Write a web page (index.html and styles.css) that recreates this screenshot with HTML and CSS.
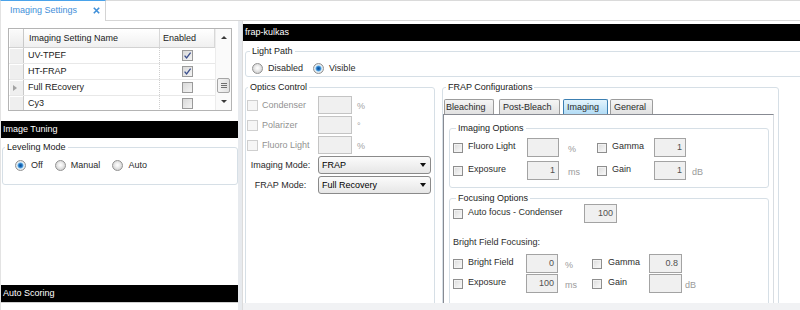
FILE: index.html
```html
<!DOCTYPE html>
<html>
<head>
<meta charset="utf-8">
<title>Imaging Settings</title>
<link rel="stylesheet" href="styles.css">
</head>
<body>
<div class="app">
  <div class="tabstrip">
    <div class="doctab">
      <span class="doctab-title">Imaging Settings</span>
      <svg class="close" width="7" height="7" viewBox="0 0 7 7"><path d="M0.8 0.8 L6.2 6.2 M6.2 0.8 L0.8 6.2" stroke="#3f8fd9" stroke-width="1.6" fill="none"/></svg>
    </div>
    <div class="stripfill"></div>
  </div>

  <div class="main">
    <div class="left">
      <div class="gridwrap">
        <div class="grid">
          <div class="gbody">
            <div class="grow ghead">
              <div class="rh"></div>
              <div class="cname">Imaging Setting Name</div>
              <div class="cen hd">Enabled</div>
            </div>
            <div class="grow">
              <div class="rh"></div>
              <div class="cname">UV-TPEF</div>
              <div class="cen"><span class="gcb"><svg width="9" height="9" viewBox="0 0 9 9"><path d="M1.6 4.6 L3.6 7 L7.6 1.6" stroke="#3b4f8e" stroke-width="1.3" fill="none"/></svg></span></div>
            </div>
            <div class="grow">
              <div class="rh"></div>
              <div class="cname">HT-FRAP</div>
              <div class="cen"><span class="gcb"><svg width="9" height="9" viewBox="0 0 9 9"><path d="M1.6 4.6 L3.6 7 L7.6 1.6" stroke="#3b4f8e" stroke-width="1.3" fill="none"/></svg></span></div>
            </div>
            <div class="grow">
              <div class="rh"><span class="cur"></span></div>
              <div class="cname">Full REcovery</div>
              <div class="cen"><span class="gcb"></span></div>
            </div>
            <div class="grow">
              <div class="rh"></div>
              <div class="cname">Cy3</div>
              <div class="cen"><span class="gcb"></span></div>
            </div>
          </div>
          <div class="vscroll">
            <div class="sarrow"><span class="tri-up"></span></div>
            <div class="strack"><div class="thumb"><i></i><i></i><i></i></div></div>
            <div class="sarrow"><span class="tri-down"></span></div>
          </div>
        </div>
      </div>

      <div class="bar tuning">Image Tuning</div>

      <fieldset class="gb leveling">
        <legend>Leveling Mode</legend>
        <div class="radios">
          <label class="rb"><span class="radio on"></span>Off</label>
          <label class="rb"><span class="radio"></span>Manual</label>
          <label class="rb"><span class="radio"></span>Auto</label>
        </div>
      </fieldset>

      <div class="bar scoring">Auto Scoring</div>
    </div>

    <div class="splitter"></div>

    <div class="right">
      <div class="rcontent">
        <div class="bar title">frap-kulkas</div>

        <fieldset class="gb lightpath">
          <legend>Light Path</legend>
          <div class="radios lp">
            <label class="rb"><span class="radio"></span>Disabled</label>
            <label class="rb"><span class="radio on"></span>Visible</label>
          </div>
        </fieldset>

        <div class="lower">
          <fieldset class="gb optics">
            <legend>Optics Control</legend>
            <div class="opt-rows">
              <div class="opt-row"><span class="cb dis"></span><span class="lbl dis">Condenser</span><span class="inp dis"></span><span class="unit dis">%</span></div>
              <div class="opt-row"><span class="cb dis"></span><span class="lbl dis">Polarizer</span><span class="inp dis"></span><span class="unit dis">°</span></div>
              <div class="opt-row"><span class="cb dis"></span><span class="lbl dis">Fluoro Light</span><span class="inp dis"></span><span class="unit dis">%</span></div>
              <div class="sel-row"><span class="sel-lbl">Imaging Mode:</span><span class="select">FRAP<span class="tri-down big"></span></span></div>
              <div class="sel-row"><span class="sel-lbl">FRAP Mode:</span><span class="select">Full Recovery<span class="tri-down big"></span></span></div>
            </div>
          </fieldset>

          <fieldset class="gb frapcfg">
            <legend>FRAP Configurations</legend>
            <div class="tabs">
              <span class="tab t-bleach">Bleaching</span>
              <span class="tab t-post">Post-Bleach</span>
              <span class="tab t-img active">Imaging</span>
              <span class="tab t-gen">General</span>
            </div>
            <div class="tabpanel">
              <fieldset class="gb imgopts">
                <legend>Imaging Options</legend>
                <div class="io-rows">
                  <div class="io-row"><span class="cb"></span><span class="lbl">Fluoro Light</span><span class="inp"></span><span class="unit">%</span><span class="cb"></span><span class="lbl">Gamma</span><span class="inp">1</span><span class="unit"></span></div>
                  <div class="io-row"><span class="cb"></span><span class="lbl">Exposure</span><span class="inp">1</span><span class="unit">ms</span><span class="cb"></span><span class="lbl">Gain</span><span class="inp">1</span><span class="unit">dB</span></div>
                </div>
              </fieldset>
              <fieldset class="gb focopts">
                <legend>Focusing Options</legend>
                <div class="af-row"><span class="cb"></span><span class="lbl">Auto focus - Condenser</span><span class="inp">100</span></div>
                <div class="bff">Bright Field Focusing:</div>
                <div class="fo-rows">
                  <div class="fo-row"><span class="cb"></span><span class="lbl">Bright Field</span><span class="inp">0</span><span class="unit">%</span><span class="cb"></span><span class="lbl">Gamma</span><span class="inp">0.8</span><span class="unit"></span></div>
                  <div class="fo-row"><span class="cb"></span><span class="lbl">Exposure</span><span class="inp">100</span><span class="unit">ms</span><span class="cb"></span><span class="lbl">Gain</span><span class="inp"></span><span class="unit">dB</span></div>
                </div>
              </fieldset>
            </div>
          </fieldset>
        </div>
      </div>
      <div class="rfoot"></div>
    </div>
  </div>
</div>
</body>
</html>
```

FILE: styles.css
```css
* { box-sizing: border-box; }
html, body { margin: 0; padding: 0; }
body {
  width: 800px;
  height: 310px;
  overflow: hidden;
  background: #fff;
  font-family: "Liberation Sans", Arial, sans-serif;
  font-size: 9px;
  line-height: 11px;
  color: #1a1a1a;
}
.app { display: flex; flex-direction: column; height: 310px; }

/* document tab strip */
.tabstrip { display: flex; height: 21px; flex: none; }
.doctab {
  width: 106px;
  border-top: 1px solid #4aa3ea;
  border-left: 1px solid #e2e2e2;
  border-right: 1px solid #d4d4d4;
  display: flex;
  align-items: center;
  padding: 0 0 1px 9px;
  color: #3f8fd9;
}
.doctab-title { width: 83px; }
.close { flex: none; }
.stripfill { flex: 1; border-top: 1px solid #dadada; border-bottom: 1px solid #d6d6d6; }

.main { display: flex; flex: 1; min-height: 0; }

/* left column */
.left {
  width: 238px;
  flex: none;
  display: flex;
  flex-direction: column;
  border-left: 1px solid #e3e3e3;
}
.gridwrap { padding: 7px 6px 0 7px; flex: none; }
.grid {
  display: flex;
  height: 83px;
  border: 1px solid #b4b4b4;
  overflow: hidden;
}
.gbody { width: 206px; flex: none; }
.grow { display: flex; height: 16px; border-bottom: 1px solid #e8e8e8; }
.grow.ghead {
  height: 19px;
  background: linear-gradient(#ffffff, #f0f0f0);
  border-bottom: 1px solid #d2d2d2;
}
.rh {
  width: 15px;
  flex: none;
  background: #efefef;
  border-right: 1px solid #c9c9c9;
  box-shadow: inset 1px 1px #ffffff;
  display: flex;
  align-items: center;
  padding-left: 4px;
}
.ghead .rh { background: linear-gradient(#fbfbfb, #ececec); }
.cname {
  width: 136px;
  flex: none;
  display: flex;
  align-items: center;
  padding: 0 0 1px 4px;
  border-right: 1px dotted #cfcfcf;
}
.ghead .cname { padding: 1px 0 0 5px; border-right: 1px solid #d8d8d8; }
.cen { flex: 1; display: flex; align-items: center; justify-content: center; padding-right: 1px; }
.cen.hd { justify-content: flex-start; padding: 1px 0 0 3px; border-right: 1px solid #d8d8d8; }
.cur {
  width: 0; height: 0;
  border-left: 4px solid #a3a3a3;
  border-top: 3.5px solid transparent;
  border-bottom: 3.5px solid transparent;
}
.gcb {
  width: 11px; height: 11px;
  border: 1px solid #9a9a9a;
  background: linear-gradient(135deg, #d9d9d9, #f4f4f4);
  display: flex; align-items: center; justify-content: center;
}
.vscroll {
  flex: 1;
  display: flex;
  flex-direction: column;
  background: #fafafa;
  border-left: 1px solid #ececec;
}
.sarrow { height: 17px; flex: none; display: flex; align-items: center; justify-content: center; }
.strack { flex: 1; }
.thumb {
  margin: 32px 1px 0 1px;
  height: 15px;
  border: 1px solid #a6a6a6;
  border-radius: 2px;
  background: linear-gradient(90deg, #f4f4f4, #e2e2e2);
  display: flex;
  flex-direction: column;
  align-items: center;
  justify-content: center;
  gap: 1px;
}
.thumb i { display: block; width: 6px; height: 1px; background: #707070; }
.tri-up {
  width: 0; height: 0;
  border-bottom: 3px solid #3a3a3a;
  border-left: 3px solid transparent;
  border-right: 3px solid transparent;
}
.tri-down {
  width: 0; height: 0;
  border-top: 3px solid #3a3a3a;
  border-left: 3px solid transparent;
  border-right: 3px solid transparent;
}
.tri-down.big { border-top-width: 4px; border-left-width: 3.5px; border-right-width: 3.5px; border-top-color: #111; }

/* black title bars */
.bar {
  flex: none;
  background: #000;
  color: #fff;
  height: 17px;
  line-height: 17px;
  padding-left: 2px;
  white-space: nowrap;
}
.bar.tuning { margin-top: 10px; }
.bar.scoring { margin-top: auto; margin-bottom: 7px; border-bottom: 1px solid #cfcfcf; height: 18px; line-height: 17px; }

/* group boxes */
.gb {
  margin: 0;
  min-width: 0;
  border: 1px solid #d6dfe6;
  border-radius: 3px;
  padding: 0;
}
.gb legend {
  padding: 0 2px;
  line-height: 12px;
  color: #1a1a1a;
}

.leveling { margin: 3px 0 0 1px; padding: 6px 0 13px 2px; }
.radios { display: flex; align-items: center; height: 12px; margin-left: 10px; gap: 12px; }
.rb { display: flex; align-items: center; gap: 5px; color: #2a2a2a; }
.radio {
  width: 11px; height: 11px;
  flex: none;
  border-radius: 50%;
  border: 1px solid #929292;
  background: radial-gradient(circle at 50% 45%, #ffffff 0, #f0f0f0 2px, #d2d2d2 5px);
}
.radio.on {
  background: radial-gradient(circle, #0c4f96 0, #1e6fbf 1.6px, #62aee6 2.6px, #e4f2fb 3.4px, #e0e0e0 4.6px);
}

.splitter { width: 4px; flex: none; background: #e7eaee; }

/* right side */
.right {
  flex: 1;
  min-width: 0;
  display: flex;
  flex-direction: column;
  border-left: 1px solid #dcdcdc;
}
.rcontent { flex: 1; min-height: 0; overflow: hidden; padding-top: 3px; }
.rfoot { height: 7px; flex: none; background: #f1f2f4; }

.lightpath { margin: 4px -20px 0 2px; padding: 5px 0 2px 4px; }
.radios.lp { margin-left: 2px; gap: 10px; }

.lower { display: flex; align-items: stretch; margin-top: 4px; gap: 7px; }

.optics { margin-left: 2px; width: 190px; flex: none; padding: 3px 0 0 1px; }
.optics legend { margin-left: 1px; }
.opt-rows { display: flex; flex-direction: column; gap: 2px; }
.opt-row {
  display: grid;
  grid-template-columns: 15px 56px 34px auto;
  align-items: center;
  height: 18px;
}
.sel-row {
  display: grid;
  grid-template-columns: 67px 113px;
  column-gap: 4px;
  align-items: center;
  height: 18px;
}
.sel-lbl { text-align: center; color: #2a2a2a; }
.select {
  height: 18px;
  border: 1px solid #8a8a8a;
  border-radius: 3px;
  background: linear-gradient(#fbfbfb, #e6e6e6);
  display: flex;
  align-items: center;
  justify-content: space-between;
  padding: 0 4px 0 3px;
  color: #000;
}

.cb {
  width: 10px; height: 10px;
  border: 1px solid #8e8e8e;
  background: linear-gradient(135deg, #dadada, #fbfbfb);
  box-shadow: inset 0 0 0 1px #f2f2f2;
}
.cb.dis { width: 11px; height: 11px; border-color: #cfcfcf; background: #f6f6f6; box-shadow: none; }
.lbl { color: #2e2e2e; white-space: nowrap; padding-bottom: 2px; }
.lbl.dis { color: #929292; padding-bottom: 0; }
.inp {
  height: 19px;
  border: 1px solid #a3a3a3;
  background: #f0f0f0;
  color: #505050;
  text-align: right;
  line-height: 17px;
  padding-right: 3px;
}
.inp.dis { height: 18px; border-color: #c4c4c4; }
.unit { color: #9a9a9a; padding-top: 3px; }
.unit.dis { padding-left: 5px; color: #a3a3a3; }

.frapcfg { width: 337px; flex: none; padding: 6px 4px 0 0; }
.frapcfg legend { margin-left: 3px; }
.tabs { display: flex; height: 15px; margin-left: 1px; }
.tab {
  height: 15px;
  border: 1px solid #9c9c9c;
  border-bottom: none;
  border-radius: 2px 2px 0 0;
  background: linear-gradient(#f5f5f5, #e1e1e1);
  padding-left: 3px;
  line-height: 14px;
  color: #2a2a2a;
  white-space: nowrap;
}
.t-bleach { width: 50px; margin-right: 5px; padding-left: 1px; }
.t-post { width: 61px; margin-right: 3px; }
.t-img { width: 45px; margin-right: 2px; }
.t-gen { width: 43px; }
.tab.active { border-color: #3c7fb1; background: linear-gradient(#e3f4fd, #b2dcf6); }

.tabpanel {
  border-top: 1px solid #878a92;
  border-left: 1px solid #878a92;
  border-right: 1px solid #d8dde2;
  padding: 7px 4px 0 5px;
}
.imgopts { padding: 4px 0 7px 3px; }
.io-rows { display: flex; flex-direction: column; gap: 4px; }
.io-row {
  display: grid;
  grid-template-columns: 15px 59px 32px 38px 15px 42px 32px auto;
  align-items: center;
  height: 19px;
}
.io-row .unit:nth-of-type(4) { padding-left: 9px; }
.io-row .unit:last-child { padding-left: 6px; }

.focopts { margin-top: 4px; padding: 0 0 30px 3px; }
.af-row {
  display: grid;
  grid-template-columns: 15px 116px 33px;
  align-items: center;
  height: 19px;
}
.bff { margin-top: 14px; color: #2e2e2e; line-height: 11px; }
.fo-rows { display: flex; flex-direction: column; gap: 1px; margin-top: 6px; }
.fo-row {
  display: grid;
  grid-template-columns: 15px 58px 32px 34px 16px 41px 33px auto;
  align-items: center;
  height: 19px;
}
.fo-row .unit:nth-of-type(4) { padding-left: 7px; }
.fo-row .unit:last-child { padding-left: 3px; }
```
